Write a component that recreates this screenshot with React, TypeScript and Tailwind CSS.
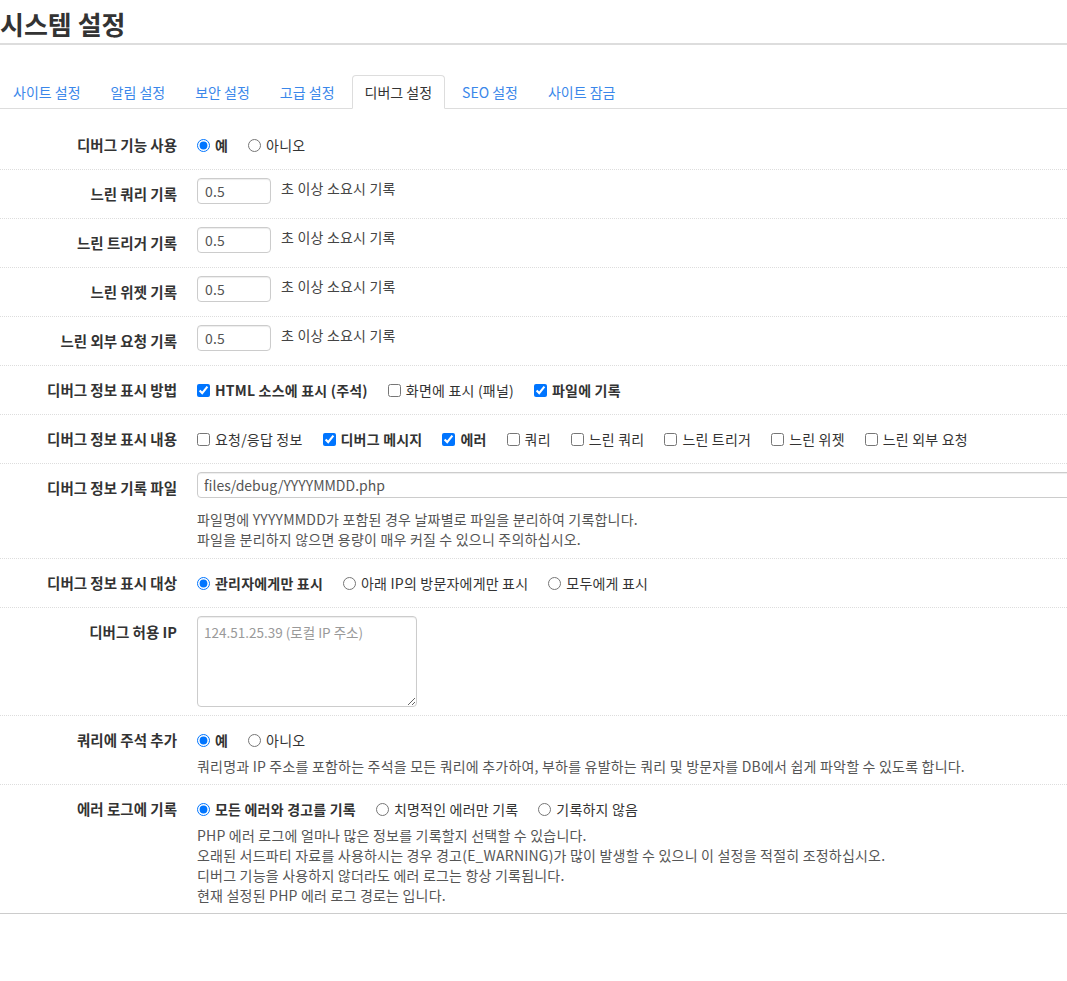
import React from "react";

type OptProps = { type: "radio" | "checkbox"; name: string; label: string; checked?: boolean };

function Opt({ type, name, label, checked }: OptProps) {
  return (
    <label className="flex items-center gap-[5px] whitespace-nowrap">
      <input type={type} name={name} defaultChecked={checked} className="m-0 h-[13px] w-[13px] shrink-0" />
      <span className={checked ? "font-bold text-[#333]" : "text-[#333]"}>{label}</span>
    </label>
  );
}

function Row({ label, children, last }: { label: string; children: React.ReactNode; last?: boolean }) {
  return (
    <div
      className={
        "flex py-2 " +
        (last ? "border-b border-solid border-[#ccc]" : "border-b border-dotted border-[#ddd]")
      }
    >
      <div className="w-[177px] shrink-0 whitespace-nowrap text-right text-[14.5px] font-bold leading-[32px] tracking-normal text-[#333]">{label}</div>
      <div className="ml-[20px] min-w-0 flex-1 tracking-[0.2px]">{children}</div>
    </div>
  );
}

function Opts({ children }: { children: React.ReactNode }) {
  return <div className="flex h-[32px] items-center gap-x-[20px]">{children}</div>;
}

function SlowRow({ label }: { label: string }) {
  return (
    <Row label={label}>
      <div className="flex items-start gap-[10px]">
        <input
          type="text"
          defaultValue="0.5"
          className="h-[26px] w-[74px] rounded-[4px] border border-[#ccc] px-[7px] text-[14px] text-[#555] shadow-[inset_0_1px_1px_rgba(0,0,0,0.075)] outline-none"
        />
        <span className="leading-[20px] text-[#444]">초 이상 소요시 기록</span>
      </div>
    </Row>
  );
}

const tabs = ["사이트 설정", "알림 설정", "보안 설정", "고급 설정", "디버그 설정", "SEO 설정", "사이트 잠금"];

export default function App() {
  return (
    <div className="w-full overflow-x-hidden bg-white font-['Noto_Sans_CJK_KR','Noto_Sans',sans-serif] text-[14px] text-[#333]">
      <h1 className="border-b-2 border-[#ddd] pt-[6px] pb-[1px] text-[26px] font-bold leading-[36px] text-[#333]">
        시스템 설정
      </h1>

      <div className="mt-[30px] flex border-b border-[#ddd]">
        {tabs.map((t) => {
          const active = t === "디버그 설정";
          return (
            <div
              key={t}
              className={
                "mr-[4px] -mb-px rounded-t-[4px] border px-[12px] py-[6px] leading-[20px] whitespace-nowrap " +
                (active
                  ? "border-[#ddd] border-b-white bg-white text-[#333]"
                  : "border-transparent text-[#3a87ea]")
              }
            >
              {t}
            </div>
          );
        })}
      </div>

      <div className="mt-[12px]">
        <Row label="디버그 기능 사용">
          <Opts>
            <Opt type="radio" name="debug" label="예" checked />
            <Opt type="radio" name="debug" label="아니오" />
          </Opts>
        </Row>

        <SlowRow label="느린 쿼리 기록" />
        <SlowRow label="느린 트리거 기록" />
        <SlowRow label="느린 위젯 기록" />
        <SlowRow label="느린 외부 요청 기록" />

        <Row label="디버그 정보 표시 방법">
          <Opts>
            <Opt type="checkbox" name="m1" label="HTML 소스에 표시 (주석)" checked />
            <Opt type="checkbox" name="m2" label="화면에 표시 (패널)" />
            <Opt type="checkbox" name="m3" label="파일에 기록" checked />
          </Opts>
        </Row>

        <Row label="디버그 정보 표시 내용">
          <Opts>
            <Opt type="checkbox" name="c1" label="요청/응답 정보" />
            <Opt type="checkbox" name="c2" label="디버그 메시지" checked />
            <Opt type="checkbox" name="c3" label="에러" checked />
            <Opt type="checkbox" name="c4" label="쿼리" />
            <Opt type="checkbox" name="c5" label="느린 쿼리" />
            <Opt type="checkbox" name="c6" label="느린 트리거" />
            <Opt type="checkbox" name="c7" label="느린 위젯" />
            <Opt type="checkbox" name="c8" label="느린 외부 요청" />
          </Opts>
        </Row>

        <Row label="디버그 정보 기록 파일">
          <div className="h-[32px]">
            <input
              type="text"
              defaultValue="files/debug/YYYYMMDD.php"
              className="h-[26px] w-[900px] rounded-[4px] border border-[#ccc] px-[6px] text-[14px] tracking-normal text-[#555] shadow-[inset_0_1px_1px_rgba(0,0,0,0.075)] outline-none"
            />
          </div>
          <div className="mt-[5px] mb-[1px] leading-[20px] text-[#555]">
            <p>파일명에 YYYYMMDD가 포함된 경우 날짜별로 파일을 분리하여 기록합니다.</p>
            <p>파일을 분리하지 않으면 용량이 매우 커질 수 있으니 주의하십시오.</p>
          </div>
        </Row>

        <Row label="디버그 정보 표시 대상">
          <Opts>
            <Opt type="radio" name="target" label="관리자에게만 표시" checked />
            <Opt type="radio" name="target" label="아래 IP의 방문자에게만 표시" />
            <Opt type="radio" name="target" label="모두에게 표시" />
          </Opts>
        </Row>

        <Row label="디버그 허용 IP">
          <textarea
            placeholder="124.51.25.39 (로컬 IP 주소)"
            className="block h-[91px] w-[220px] rounded-[4px] border border-[#ccc] px-[6px] py-[4px] text-[13.5px] leading-[22px] tracking-normal text-[#555] shadow-[inset_0_1px_1px_rgba(0,0,0,0.075)] outline-none placeholder:text-[#999]"
          />
        </Row>

        <Row label="쿼리에 주석 추가">
          <Opts>
            <Opt type="radio" name="qc" label="예" checked />
            <Opt type="radio" name="qc" label="아니오" />
          </Opts>
          <p className="leading-[20px] text-[#555]">
            쿼리명과 IP 주소를 포함하는 주석을 모든 쿼리에 추가하여, 부하를 유발하는 쿼리 및 방문자를 DB에서 쉽게 파악할 수 있도록 합니다.
          </p>
        </Row>

        <Row label="에러 로그에 기록" last>
          <Opts>
            <Opt type="radio" name="el" label="모든 에러와 경고를 기록" checked />
            <Opt type="radio" name="el" label="치명적인 에러만 기록" />
            <Opt type="radio" name="el" label="기록하지 않음" />
          </Opts>
          <div className="leading-[20px] text-[#555]">
            <p>PHP 에러 로그에 얼마나 많은 정보를 기록할지 선택할 수 있습니다.</p>
            <p>오래된 서드파티 자료를 사용하시는 경우 경고(E_WARNING)가 많이 발생할 수 있으니 이 설정을 적절히 조정하십시오.</p>
            <p>디버그 기능을 사용하지 않더라도 에러 로그는 항상 기록됩니다.</p>
            <p>현재 설정된 PHP 에러 로그 경로는 입니다.</p>
          </div>
        </Row>
      </div>
      <div className="h-[68px]" />
    </div>
  );
}
